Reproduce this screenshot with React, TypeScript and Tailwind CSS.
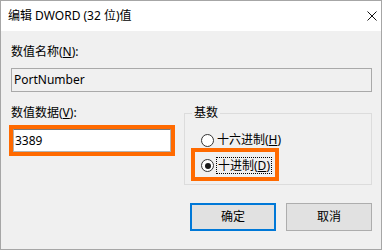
import React from "react";

const font = { fontFamily: '"Noto Sans", "Noto Sans CJK SC", sans-serif' };

function Radio({ checked }: { checked?: boolean }) {
  return (
    <span className="flex h-[13px] w-[13px] shrink-0 items-center justify-center rounded-full border border-[#333333] bg-white">
      {checked && <span className="h-[6px] w-[6px] rounded-full bg-[#1a1a1a]" />}
    </span>
  );
}

export default function App() {
  return (
    <div
      className="flex h-[250px] w-[382px] flex-col border border-[#a6a6a6] bg-[#f0f0f0] text-[12px] leading-[16px] text-black"
      style={font}
    >
      {/* title bar */}
      <div className="flex h-[30px] shrink-0 items-center justify-between bg-white pl-[7px] pr-[4px]">
        <span>编辑 DWORD (32 位)值</span>
        <svg width="10" height="10" viewBox="0 0 10 10" className="mt-[-1px]">
          <path d="M0.5 0.5L9.5 9.5M9.5 0.5L0.5 9.5" stroke="#111" strokeWidth="1" />
        </svg>
      </div>

      <div className="flex flex-1 flex-col pl-[10px] pr-[9px] pt-[13px]">
        <div>
          数值名称(<u>N</u>):
        </div>
        <div className="mt-[8px] flex h-[24px] items-center border border-[#a9a9a9] bg-[#f0f0f0] pl-[2px]">
          PortNumber
        </div>

        <div className="mt-[13px] flex">
          {/* value data */}
          <div className="flex w-[173px] flex-col">
            <div>
              数值数据(<u>V</u>):
            </div>
            <div className="ml-[-2px] mt-[4px] h-[31px] w-[166px] border-4 border-[#ff6a00]">
              <div className="flex h-full items-center border border-t-[#7a7a7a] border-[#b4b4b4] bg-white pl-[1px]">
                3389
              </div>
            </div>
          </div>

          {/* radix group */}
          <fieldset className="flex h-[80px] flex-1 flex-col border border-[#dcdcdc] pb-[3px]">
            <legend className="ml-[7px] px-[2px]">基数</legend>
            <div className="ml-[16px] mt-[10px] flex h-[18px] items-center">
              <Radio />
              <span className="ml-[3px]">
                十六进制(<u>H</u>)
              </span>
            </div>
            <div className="ml-[6px] mt-[-1px] flex h-[33px] w-[88px] items-center border-4 border-[#ff6a00] pl-[6px] pt-[2px]">
              <Radio checked />
              <span className="ml-[2px] border border-dotted border-black px-[1px] leading-[15px]">
                十进制(<u>D</u>)
              </span>
            </div>
          </fieldset>
        </div>

        <div className="mt-[18px] flex justify-end gap-[10px]">
          <button className="h-[28px] w-[86px] border-2 border-[#0078d7] bg-[#e1e1e1]">确定</button>
          <button className="h-[28px] w-[86px] border border-[#adadad] bg-[#e1e1e1]">取消</button>
        </div>
      </div>
    </div>
  );
}
